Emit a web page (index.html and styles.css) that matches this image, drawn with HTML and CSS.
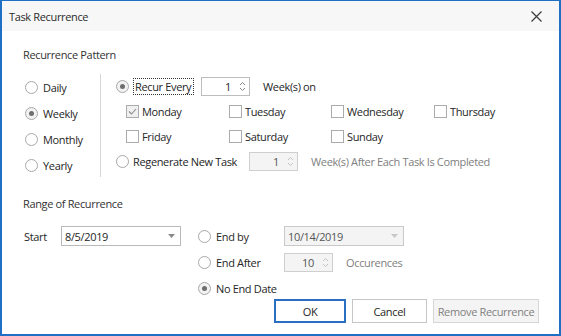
FILE: index.html
```html
<!DOCTYPE html>
<html>
<head>
<meta charset="utf-8">
<link rel="stylesheet" href="styles.css">
</head>
<body>
<div class="window">
  <div class="titlebar">
    <span class="title">Task Recurrence</span>
    <svg class="close" width="11" height="11" viewBox="0 0 11 11"><path d="M0.5 0.5 L10.5 10.5 M10.5 0.5 L0.5 10.5" stroke="#3c3c3c" stroke-width="1.2" fill="none"/></svg>
  </div>
  <div class="content">
    <div class="section-title">Recurrence Pattern</div>
    <div class="pattern">
      <div class="types">
        <div class="row"><span class="radio"></span><span>Daily</span></div>
        <div class="row"><span class="radio checked"></span><span>Weekly</span></div>
        <div class="row"><span class="radio"></span><span>Monthly</span></div>
        <div class="row"><span class="radio"></span><span>Yearly</span></div>
      </div>
      <div class="sep"></div>
      <div class="weekly">
        <div class="wrow">
          <span class="radio checked"></span>
          <span class="focus-label">Recur Every</span>
          <div class="spin recur-spin"><span class="val">1</span><svg class="arrows" width="7" height="13" viewBox="0 0 7 13"><path d="M1 5 L3.5 2.5 L6 5" stroke="#8a8a8a" fill="none"/><path d="M1 8 L3.5 10.5 L6 8" stroke="#8a8a8a" fill="none"/></svg></div>
          <span class="after">Week(s) on</span>
        </div>
        <div class="days">
          <div class="day"><span class="check checked"><svg width="11" height="11" viewBox="0 0 11 11"><path d="M2 5.5 L4.5 8 L9 3" stroke="#8c8c8c" stroke-width="1.1" fill="none"/></svg></span><span>Monday</span></div>
          <div class="day"><span class="check"></span><span>Tuesday</span></div>
          <div class="day"><span class="check"></span><span>Wednesday</span></div>
          <div class="day"><span class="check"></span><span>Thursday</span></div>
          <div class="day"><span class="check"></span><span>Friday</span></div>
          <div class="day"><span class="check"></span><span>Saturday</span></div>
          <div class="day"><span class="check"></span><span>Sunday</span></div>
        </div>
        <div class="wrow">
          <span class="radio"></span>
          <span class="regen-label">Regenerate New Task</span>
          <div class="spin disabled"><span class="val">1</span><svg class="arrows" width="7" height="13" viewBox="0 0 7 13"><path d="M1 5 L3.5 2.5 L6 5" stroke="#c4c4c4" fill="none"/><path d="M1 8 L3.5 10.5 L6 8" stroke="#c4c4c4" fill="none"/></svg></div>
          <span class="after muted">Week(s) After Each Task Is Completed</span>
        </div>
      </div>
    </div>

    <div class="section-title range-title">Range of Recurrence</div>
    <div class="range">
      <div class="start">
        <span class="start-label">Start</span>
        <div class="combo"><span>8/5/2019</span><svg width="7" height="4" viewBox="0 0 7 4"><path d="M0 0 L7 0 L3.5 4 Z" fill="#8a8a8a"/></svg></div>
      </div>
      <div class="ends">
        <div class="erow"><span class="radio"></span><span>End by</span></div>
        <div class="ctl"><div class="combo disabled"><span>10/14/2019</span><svg width="7" height="4" viewBox="0 0 7 4"><path d="M0 0 L7 0 L3.5 4 Z" fill="#c8c8c8"/></svg></div></div>
        <div class="erow"><span class="radio"></span><span>End After</span></div>
        <div class="ctl"><div class="spin disabled"><span class="val">10</span><svg class="arrows" width="7" height="13" viewBox="0 0 7 13"><path d="M1 5 L3.5 2.5 L6 5" stroke="#c4c4c4" fill="none"/><path d="M1 8 L3.5 10.5 L6 8" stroke="#c4c4c4" fill="none"/></svg></div><span class="after muted">Occurences</span></div>
        <div class="erow"><span class="radio checked"></span><span>No End Date</span></div>
        <div class="ctl"></div>
      </div>
    </div>
    <div class="buttons">
      <div class="btn ok">OK</div>
      <div class="btn cancel">Cancel</div>
      <div class="btn remove">Remove Recurrence</div>
    </div>
  </div>
</div>
</body>
</html>
```

FILE: styles.css
```css
* { box-sizing: border-box; }
html, body { margin: 0; padding: 0; }
body {
  width: 561px;
  height: 336px;
  overflow: hidden;
  background: #ffffff;
  font-family: "Open Sans", "Noto Sans", sans-serif;
  font-size: 11px;
  letter-spacing: -0.35px;
  color: #262626;
}
.window {
  width: 561px;
  height: 336px;
  border: 2px solid #1f6fc4;
  border-top-width: 1px;
  display: flex;
  flex-direction: column;
}
.titlebar {
  height: 30px;
  flex-shrink: 0;
  background: #f7f7f7;
  display: flex;
  align-items: center;
  justify-content: space-between;
  padding: 0 17px 0 7px;
}
.title { color: #2b2b2b; line-height: 15px; }
.close { display: block; }
.content {
  padding: 16px 0 0 21px;
  display: flex;
  flex-direction: column;
}
.section-title { line-height: 15px; height: 15px; color: #333; }
.pattern { display: flex; margin-top: 12px; height: 104px; }
.types { width: 77px; padding-left: 2px; display: flex; flex-direction: column; }
.row { height: 26px; display: flex; align-items: center; }
.radio {
  width: 13px;
  height: 13px;
  border: 1px solid #a8a8a8;
  border-radius: 50%;
  background: #fff;
  margin-right: 5px;
  flex-shrink: 0;
  display: flex;
  align-items: center;
  justify-content: center;
}
.radio.checked { background: #f2f2f2; }
.radio.checked::after {
  content: "";
  width: 5px;
  height: 5px;
  border-radius: 50%;
  background: #6e6e6e;
}
.sep { width: 1px; background: #d6d6d6; height: 103px; }
.weekly { padding-left: 15px; display: flex; flex-direction: column; }
.wrow { height: 25px; display: flex; align-items: center; }
.wrow .radio { margin-right: 4px; }
.focus-label {
  width: 61px;
  height: 17px;
  border: 1px dotted #333;
  padding-left: 1px;
  line-height: 15px;
  white-space: nowrap;
}
.spin {
  width: 49px;
  height: 19px;
  border: 1px solid #bdbdbd;
  background: #fff;
  display: flex;
  align-items: center;
  justify-content: flex-end;
  padding-right: 3px;
}
.spin .val { margin-right: 8px; }
.spin .arrows { display: block; }
.spin.disabled { background: #f4f4f4; border-color: #cfcfcf; color: #555; }
.recur-spin { margin-left: 7px; }
.after { margin-left: 13px; white-space: nowrap; }
.muted { color: #808080; }
.regen-label { width: 116px; white-space: nowrap; }
.days {
  display: grid;
  grid-template-columns: 103px 102px 103px auto;
  grid-auto-rows: 25px;
  margin-left: 10px;
}
.day { display: flex; align-items: center; white-space: nowrap; }
.check {
  width: 13px;
  height: 13px;
  border: 1px solid #ababab;
  background: #fff;
  margin-right: 3px;
  flex-shrink: 0;
  display: flex;
  align-items: center;
  justify-content: center;
}
.check.checked { background: #f0f0f0; }
.check svg { display: block; }
.range-title { margin-top: 18px; }
.range { display: flex; margin-top: 12px; }
.start { width: 175px; height: 26px; display: flex; align-items: center; padding-left: 1px; }
.start-label { width: 37px; }
.combo {
  width: 120px;
  height: 20px;
  border: 1px solid #bababa;
  background: #fff;
  display: flex;
  align-items: center;
  justify-content: space-between;
  padding: 0 5px 0 3px;
}
.combo svg { display: block; }
.combo.disabled { background: #f4f4f4; border-color: #c9c9c9; color: #555; }
.ends { display: grid; grid-template-columns: 86px auto; grid-auto-rows: 26px; }
.erow { display: flex; align-items: center; white-space: nowrap; }
.ctl { display: flex; align-items: center; }
.buttons {
  display: flex;
  justify-content: flex-end;
  gap: 6px;
  margin-top: -2px;
  padding-right: 20px;
}
.btn {
  height: 24px;
  display: flex;
  align-items: center;
  justify-content: center;
  border: 1px solid #c6c6c6;
  background: #fff;
}
.btn.ok { width: 72px; border: 2px solid #2a6fc2; }
.btn.cancel { width: 75px; }
.btn.remove { width: 106px; background: #f4f4f4; border-color: #d6d6d6; color: #808080; }
```
